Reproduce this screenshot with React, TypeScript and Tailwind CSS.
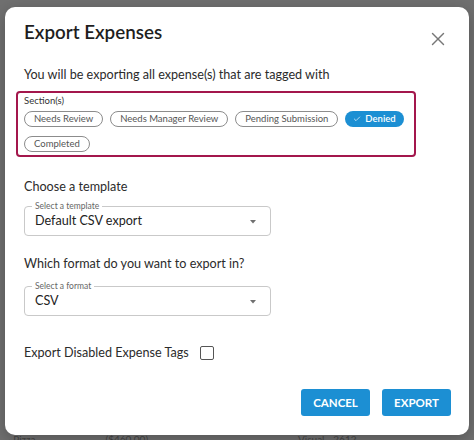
import { Check, X } from "lucide-react";

const sections = [
  { label: "Needs Review", active: false },
  { label: "Needs Manager Review", active: false },
  { label: "Pending Submission", active: false },
  { label: "Denied", active: true },
  { label: "Completed", active: false },
];

function OutlinedSelect({ label, value }: { label: string; value: string }) {
  return (
    <div className="relative w-[247px] h-[30px] rounded-[4px] border border-[#c9c9c9] flex items-center pl-[10px] pr-[12px]">
      <span className="absolute left-[7px] top-[-7px] bg-white px-[3px] text-[8.5px] leading-[12px] text-[#666]">{label}</span>
      <span className="flex-1 text-[12.6px] leading-[18px] text-[#222]">{value}</span>
      <svg width="6" height="4" viewBox="0 0 6 4" className="mr-[2px] mt-[1px]">
        <path d="M0 0 L6 0 L3 3.5 Z" fill="#707070" />
      </svg>
    </div>
  );
}

export default function App() {
  return (
    <div className="relative w-[474px] h-[440px] overflow-hidden bg-[#707070] pt-[7px] pl-[5px] font-['Lato',sans-serif]">
      {/* page behind the overlay, peeking out at the bottom */}
      <div className="absolute left-0 top-[433px] flex gap-[40px] text-[10px] leading-[12px] text-[#2a2a2a] opacity-60">
        <span className="pl-[8px]">· Pizza</span>
        <span className="pl-[30px]">($460.00)</span>
        <span className="pl-[110px]">Visual - 2612</span>
      </div>

      <div className="relative w-[464px] h-[428px] rounded-[10px] bg-white flex flex-col pl-[19px] pr-[18px] pt-[13px] shadow-[0_4px_16px_rgba(0,0,0,0.25)]">
        <div className="flex items-start justify-between">
          <h1 className="text-[18.8px] leading-[24px] font-semibold text-[#1e1e1e]">Export Expenses</h1>
          <X className="w-[22px] h-[22px] text-[#777] mr-[2px] mt-[8px]" strokeWidth={1.5} />
        </div>

        <p className="mt-[15px] text-[12.6px] leading-[20px] text-[#2b2b2b]">
          You will be exporting all expense(s) that are tagged with
        </p>

        <div className="ml-[-8px] mt-[6px] w-[400px] h-[66px] rounded-[4px] border-2 border-[#a3174c] pl-[6px] pt-[2px]">
          <div className="text-[9.5px] leading-[12px] text-[#333]">Section(s)</div>
          <div className="mt-[4px] flex flex-wrap gap-x-[7px] gap-y-[9px]">
            {sections.map((s) =>
              s.active ? (
                <span
                  key={s.label}
                  className="h-[16px] rounded-full bg-[#1c8fd3] px-[8px] flex items-center gap-[4px] text-[9.5px] font-semibold text-white"
                >
                  <Check className="w-[8px] h-[8px]" strokeWidth={2} />
                  {s.label}
                </span>
              ) : (
                <span
                  key={s.label}
                  className="h-[16px] rounded-full border border-[#8c8c8c] px-[9px] flex items-center text-[9.5px] text-[#555]"
                >
                  {s.label}
                </span>
              )
            )}
          </div>
        </div>

        <p className="mt-[20px] text-[12.6px] leading-[20px] text-[#2b2b2b]">Choose a template</p>
        <div className="mt-[9px]">
          <OutlinedSelect label="Select a template" value="Default CSV export" />
        </div>

        <p className="mt-[18px] text-[12.6px] leading-[20px] text-[#2b2b2b]">Which format do you want to export in?</p>
        <div className="mt-[12px]">
          <OutlinedSelect label="Select a format" value="CSV" />
        </div>

        <div className="mt-[27px] flex items-center gap-[11px]">
          <span className="text-[12.6px] leading-[20px] text-[#2b2b2b]">Export Disabled Expense Tags</span>
          <span className="w-[14px] h-[14px] rounded-[2px] border-[1.5px] border-[#555]" />
        </div>

        <div className="mt-[26px] flex justify-end gap-[12px]">
          <button className="w-[69px] h-[27px] rounded-[3px] bg-[#1c8fd3] text-[11.5px] font-bold text-white">CANCEL</button>
          <button className="w-[69px] h-[27px] rounded-[3px] bg-[#1c8fd3] text-[11.5px] font-bold text-white">EXPORT</button>
        </div>
      </div>
    </div>
  );
}
